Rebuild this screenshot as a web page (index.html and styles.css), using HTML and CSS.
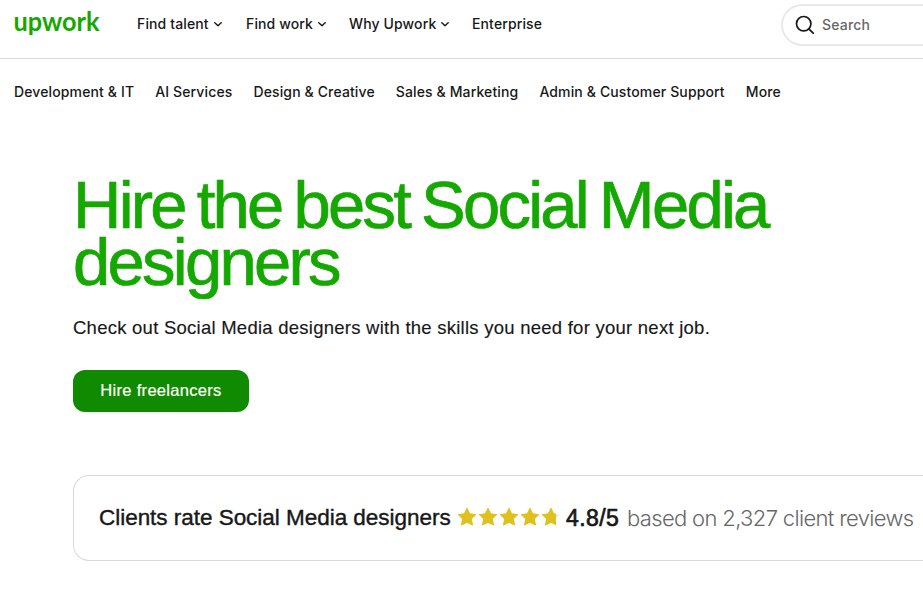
FILE: index.html
```
<!DOCTYPE html>
<html lang="en">
<head>
  <meta charset="UTF-8" />
  <meta name="viewport" content="width=device-width, initial-scale=1.0"/>
  <title>Hire Social Media Designers</title>
  <link rel="stylesheet" href="styles.css">
</head>
<body>

  <!-- Top bar -->
  <header class="header">
    <a href="#" class="logo">
      <svg width="88" height="40" viewBox="0 0 88 40" aria-label="upwork">
        <text x="-0.5" y="27" textLength="86" lengthAdjust="spacingAndGlyphs">upwork</text>
      </svg>
    </a>
    <nav class="main-nav">
      <a href="#" class="talent">Find talent <svg class="chevron" viewBox="0 0 8 5"><path d="M0.8 0.8L4 3.8L7.2 0.8"/></svg></a>
      <a href="#" class="work">Find work <svg class="chevron" viewBox="0 0 8 5"><path d="M0.8 0.8L4 3.8L7.2 0.8"/></svg></a>
      <a href="#" class="why">Why Upwork <svg class="chevron" viewBox="0 0 8 5"><path d="M0.8 0.8L4 3.8L7.2 0.8"/></svg></a>
      <a href="#">Enterprise</a>
    </nav>
    <div class="search">
      <svg width="20" height="20" viewBox="0 0 20 20"><circle cx="8.7" cy="8.7" r="7.2"/><path d="M13.8 13.8L18.2 18.2"/></svg>
      <span>Search</span>
    </div>
  </header>

  <!-- Categories -->
  <nav class="sub-nav">
    <a href="#">Development &amp; IT</a>
    <a href="#">AI Services</a>
    <a href="#">Design &amp; Creative</a>
    <a href="#">Sales &amp; Marketing</a>
    <a href="#">Admin &amp; Customer Support</a>
    <a href="#">More</a>
  </nav>

  <!-- Main content -->
  <main class="main-content">
    <h1>Hire the best Social Media<br>designers</h1>
    <p>Check out Social Media designers with the skills you need for your next job.</p>
    <a href="#" class="hire-btn">Hire freelancers</a>

    <div class="rating-card">
      <span class="rating-title">Clients rate Social Media designers</span>
      <svg class="stars" width="104" height="20" viewBox="0 0 104 20">
        <defs>
          <path id="star" d="M10 1.2L12.7 6.8L18.8 7.6L14.4 11.9L15.5 18.1L10 15.2L4.5 18.1L5.6 11.9L1.2 7.6L7.3 6.8Z"/>
          <clipPath id="filled"><rect x="0" y="0" width="99" height="20"/></clipPath>
        </defs>
        <use href="#star" x="84" class="star-empty"/>
        <g class="star-full" clip-path="url(#filled)">
          <use href="#star"/>
          <use href="#star" x="21"/>
          <use href="#star" x="42"/>
          <use href="#star" x="63"/>
          <use href="#star" x="84"/>
        </g>
      </svg>
      <strong class="score">4.8/5</strong>
      <span class="reviews">based on 2,327 client reviews</span>
    </div>
  </main>

</body>
</html>
```
FILE: styles.css
```
body {
  margin: 0;
  font-family: "Liberation Sans", Arial, sans-serif;
  background: #fff;
  color: #181818;
  overflow: hidden;
}

a {
  color: inherit;
  text-decoration: none;
}

.header {
  display: flex;
  align-items: flex-start;
  height: 58px;
  border-bottom: 1px solid #d9d9d9;
  font-family: Inter, sans-serif;
}

.logo {
  margin: 4px 0 0 14px;
  width: 123px;
  flex: none;
}

.logo svg {
  display: block;
  overflow: visible;
}

.logo text {
  font-family: Lato, sans-serif;
  font-size: 26px;
  font-weight: 700;
  fill: #14a800;
}

.main-nav {
  display: flex;
  flex: none;
  width: 644px;
  font-size: 14px;
  font-weight: 500;
  line-height: 20px;
  letter-spacing: 0.13px;
  padding-top: 14px;
}

.main-nav a {
  display: flex;
  align-items: center;
  gap: 5px;
  white-space: nowrap;
}

.main-nav .talent {
  width: 109px;
}

.main-nav .work {
  width: 103px;
}

.main-nav .why {
  width: 123px;
}

.chevron {
  width: 8px;
  height: 5px;
  margin-top: 1px;
  fill: none;
  stroke: #181818;
  stroke-width: 1.4;
  stroke-linecap: round;
  stroke-linejoin: round;
}

.search {
  display: flex;
  align-items: center;
  flex: none;
  gap: 7px;
  box-sizing: border-box;
  width: 142px;
  height: 42px;
  margin-top: 4px;
  padding-left: 12px;
  border: 2px solid #e9e9e9;
  border-right: none;
  border-radius: 21px 0 0 21px;
  color: #676767;
  font-size: 14px;
  font-weight: 500;
  letter-spacing: 0.2px;
}

.search svg {
  fill: none;
  stroke: #181818;
  stroke-width: 1.7;
  stroke-linecap: round;
}

.search span {
  margin-top: -2px;
}

.sub-nav {
  display: flex;
  gap: 21px;
  padding: 23px 0 0 14px;
  font-family: Inter, sans-serif;
  font-size: 14px;
  font-weight: 500;
  line-height: 20px;
  letter-spacing: 0.13px;
  white-space: nowrap;
}

.main-content {
  padding: 74px 0 0 73px;
}

h1 {
  margin: 0;
  color: #14a800;
  font-size: 67px;
  font-weight: 400;
  line-height: 57px;
  letter-spacing: -2.75px;
  word-spacing: -4px;
  white-space: nowrap;
  -webkit-text-stroke: 0.7px #14a800;
}

.main-content p {
  margin: 24px 0 0;
  font-size: 18.5px;
  line-height: 28px;
  letter-spacing: 0.25px;
  white-space: nowrap;
  -webkit-text-stroke: 0.15px #181818;
}

.hire-btn {
  display: flex;
  align-items: center;
  justify-content: center;
  box-sizing: border-box;
  width: 176px;
  height: 42px;
  margin-top: 28px;
  padding-bottom: 2px;
  border-radius: 12px;
  background: #108a00;
  color: #fff;
  font-size: 16.5px;
  letter-spacing: 0.3px;
  -webkit-text-stroke: 0.2px #fff;
}

.rating-card {
  display: flex;
  align-items: center;
  box-sizing: border-box;
  width: 850px;
  height: 86px;
  margin-top: 63px;
  padding-left: 25px;
  border: 1px solid #d9d9d9;
  border-right: none;
  border-radius: 16px 0 0 16px;
  font-size: 22px;
  white-space: nowrap;
}

.rating-title {
  width: 358px;
  font-size: 22.5px;
  letter-spacing: -0.03px;
  -webkit-text-stroke: 0.4px #181818;
}

.stars {
  flex: none;
  width: 104px;
  margin: -3px 5px 0 0;
}

.star-full {
  fill: #dfc01c;
  stroke: #dfc01c;
  stroke-linejoin: round;
}

.star-empty {
  fill: #e9e9e9;
}

.score {
  width: 61px;
  font-size: 23px;
  font-weight: 400;
  letter-spacing: 0.4px;
  -webkit-text-stroke: 0.7px #181818;
}

.reviews {
  color: #676767;
  font-family: Inter, sans-serif;
  font-weight: 300;
  letter-spacing: -0.66px;
}
```
